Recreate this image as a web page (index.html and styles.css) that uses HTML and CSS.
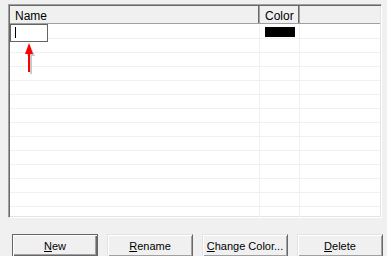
FILE: index.html
```html
<!DOCTYPE html>
<html lang="en">
<head>
    <meta charset="UTF-8">
    <title>Colors</title>
    <link rel="stylesheet" href="styles.css">
</head>
<body>

<div class="listview">
    <div class="header">
        <div class="col col-name">Name</div>
        <div class="col col-color">Color</div>
        <div class="col col-fill"></div>
    </div>
    <div class="rows" id="rows">
        <div class="row">
            <div class="cell cell-name">
                <div class="editor"><span class="caret"></span></div>
            </div>
            <div class="cell cell-color"><span class="swatch"></span></div>
            <div class="cell cell-fill"></div>
        </div>
    </div>

    <svg class="arrow" width="14" height="34" viewBox="0 0 14 34">
        <polygon points="6,3 11,14 8,14 8,32 6,32 6,14 3,14" fill="#c8c8c8"/>
        <polygon points="5,1 9,12 6,12 6,30 4,30 4,12 1,12" fill="#ff0000"/>
    </svg>
</div>

<div class="buttons">
    <button class="default"><u>N</u>ew</button>
    <button><u>R</u>ename</button>
    <button><u>C</u>hange Color...</button>
    <button><u>D</u>elete</button>
</div>

<script>
// fill the rest of the list with empty grid rows
const rows = document.getElementById('rows');
for (let i = 0; i < 14; i++) {
    const row = document.createElement('div');
    row.className = 'row';
    row.innerHTML = '<div class="cell cell-name"></div><div class="cell cell-color"></div><div class="cell cell-fill"></div>';
    rows.appendChild(row);
}
</script>

</body>
</html>
```

FILE: styles.css
```css
body {
    margin: 0;
    background-color: #f0f0f0;
    font-family: "Liberation Sans", Arial, sans-serif;
    font-size: 11px;
    color: #000;
    overflow: hidden;
}

.listview {
    position: relative;
    margin: 4px 5px 0 8px;
    height: 214px;
    box-sizing: border-box;
    border: 1px solid;
    border-color: #a0a0a0 #ffffff #ffffff #a0a0a0;
    box-shadow: inset 1px 1px 0 #696969, inset -1px -1px 0 #e3e3e3;
    background-color: #fff;
    padding: 1px;
    overflow: hidden;
}

.header {
    display: flex;
    height: 18px;
    background-color: #f0f0f0;
    border-bottom: 1px solid #a0a0a0;
    box-sizing: border-box;
}

.header .col {
    box-sizing: border-box;
    padding: 3px 0 0 5px;
    font-size: 12px;
    border-right: 1px solid #a0a0a0;
    box-shadow: inset -1px 0 0 #696969;
}

.col-name {
    width: 250px;
}

.col-color {
    width: 40px;
}

.header .col-fill {
    flex: 1;
    border-right: none;
    box-shadow: none;
}

.rows {
    padding-top: 1px;
}

.row {
    display: flex;
    height: 13px;
    border-bottom: 1px solid #f0f0f0;
}

.cell {
    position: relative;
    box-sizing: border-box;
    border-right: 1px solid #f0f0f0;
}

.cell-name {
    width: 250px;
}

.cell-color {
    width: 40px;
}

.cell-fill {
    flex: 1;
    border-right: none;
}

.editor {
    position: absolute;
    left: 0;
    top: -1px;
    width: 38px;
    height: 18px;
    box-sizing: border-box;
    border: 1px solid #646464;
    background-color: #fff;
}

.caret {
    position: absolute;
    left: 4px;
    top: 2px;
    width: 1px;
    height: 11px;
    background-color: #000;
}

.swatch {
    position: absolute;
    left: 5px;
    top: 2px;
    width: 30px;
    height: 10px;
    background-color: #000;
}

.arrow {
    position: absolute;
    left: 15px;
    top: 37px;
}

.buttons {
    display: flex;
    gap: 9px;
    padding: 16px 0 0 12px;
}

button {
    width: 86px;
    height: 23px;
    padding: 0;
    font-family: "Liberation Sans", Arial, sans-serif;
    font-size: 11px;
    color: #000;
    background-color: #f0f0f0;
    border: 1px solid;
    border-color: #e3e3e3 #696969 #696969 #e3e3e3;
    box-shadow: inset 1px 1px 0 #fff, inset -1px -1px 0 #a0a0a0;
}

button.default {
    border-color: #646464;
    box-shadow: inset 1px 1px 0 #fff, inset -1px -1px 0 #696969, inset -2px -2px 0 #a0a0a0;
}
```
